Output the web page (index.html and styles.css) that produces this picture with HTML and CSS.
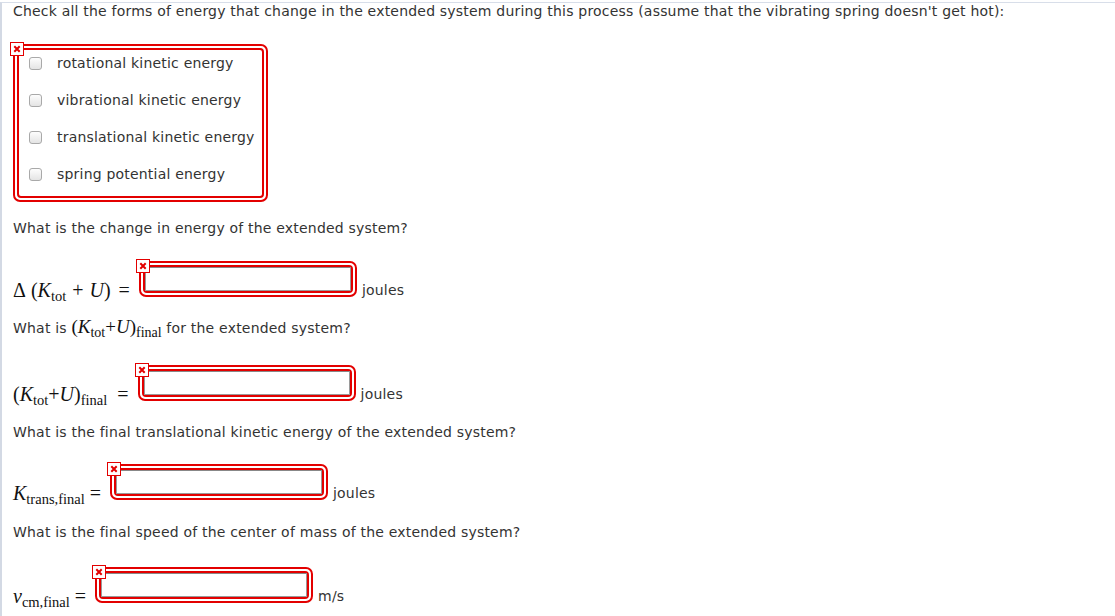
FILE: index.html
```
<!DOCTYPE html>
<html>
<head>
<meta charset="utf-8">
<link rel="stylesheet" href="styles.css">
</head>
<body>
<div class="page">
  <p class="q q-first">Check all the forms of energy that change in the extended system during this process (assume that the vibrating spring doesn't get hot):</p>

  <div class="grp">
    <span class="err"><svg width="14" height="14" viewBox="0 0 14 14"><rect x="0.5" y="0.5" width="13" height="13" fill="#fff" stroke="#e30000"/><path d="M4.3 4.3 L9.7 9.7 M9.7 4.3 L4.3 9.7" stroke="#e30000" stroke-width="2"/></svg></span>
    <div class="grp-in">
      <label class="opt"><span class="cb"></span><span>rotational kinetic energy</span></label>
      <label class="opt"><span class="cb"></span><span>vibrational kinetic energy</span></label>
      <label class="opt"><span class="cb"></span><span>translational kinetic energy</span></label>
      <label class="opt"><span class="cb"></span><span>spring potential energy</span></label>
    </div>
  </div>

  <p class="q q2">What is the change in energy of the extended system?</p>

  <div class="row r1">
    <span class="math m1"><span class="up">Δ</span><span class="sp"></span><span class="up">(</span><i>K</i><sub>tot</sub><span class="op">+</span><i>U</i><span class="up">)</span><span class="eq">=</span></span>
    <span class="ans"><span class="err"><svg width="14" height="14" viewBox="0 0 14 14"><rect x="0.5" y="0.5" width="13" height="13" fill="#fff" stroke="#e30000"/><path d="M4.3 4.3 L9.7 9.7 M9.7 4.3 L4.3 9.7" stroke="#e30000" stroke-width="2"/></svg></span><span class="ans-in"><span class="inp"></span></span></span>
    <span class="unit">joules</span>
  </div>

  <p class="q q3">What is <span class="imath"><span class="up">(</span><i>K</i><sub>tot</sub><span class="up">+</span><i>U</i><span class="up">)</span><sub>final</sub></span> for the extended system?</p>

  <div class="row r2">
    <span class="math m2"><span class="up">(</span><i>K</i><sub>tot</sub><span class="up">+</span><i>U</i><span class="up">)</span><sub>final</sub><span class="eq">=</span></span>
    <span class="ans"><span class="err"><svg width="14" height="14" viewBox="0 0 14 14"><rect x="0.5" y="0.5" width="13" height="13" fill="#fff" stroke="#e30000"/><path d="M4.3 4.3 L9.7 9.7 M9.7 4.3 L4.3 9.7" stroke="#e30000" stroke-width="2"/></svg></span><span class="ans-in"><span class="inp"></span></span></span>
    <span class="unit">joules</span>
  </div>

  <p class="q q4">What is the final translational kinetic energy of the extended system?</p>

  <div class="row r3">
    <span class="math m3"><i>K</i><sub>trans,final</sub><span class="eq">=</span></span>
    <span class="ans"><span class="err"><svg width="14" height="14" viewBox="0 0 14 14"><rect x="0.5" y="0.5" width="13" height="13" fill="#fff" stroke="#e30000"/><path d="M4.3 4.3 L9.7 9.7 M9.7 4.3 L4.3 9.7" stroke="#e30000" stroke-width="2"/></svg></span><span class="ans-in"><span class="inp"></span></span></span>
    <span class="unit">joules</span>
  </div>

  <p class="q q5">What is the final speed of the center of mass of the extended system?</p>

  <div class="row r4">
    <span class="math m4"><i>v</i><sub>cm,final</sub><span class="eq">=</span></span>
    <span class="ans"><span class="err"><svg width="14" height="14" viewBox="0 0 14 14"><rect x="0.5" y="0.5" width="13" height="13" fill="#fff" stroke="#e30000"/><path d="M4.3 4.3 L9.7 9.7 M9.7 4.3 L4.3 9.7" stroke="#e30000" stroke-width="2"/></svg></span><span class="ans-in"><span class="inp"></span></span></span>
    <span class="unit">m/s</span>
  </div>
</div>
</body>
</html>
```
FILE: styles.css
```
html, body {
  margin: 0;
  padding: 0;
  background: #fff;
}
body {
  font-family: "DejaVu Sans", Verdana, sans-serif;
  font-size: 14px;
  letter-spacing: 0.2px;
  color: #333;
}
.page {
  border-left: 2px solid #d3d9e4;
  border-top: 1px solid #d8dee9;
  margin-top: 2px;
  height: 614px;
  box-sizing: border-box;
  padding-left: 11px;
  padding-top: 0;
  overflow: hidden;
}
.q {
  margin: 0;
  line-height: 16px;
}

.grp {
  position: relative;
  width: 255px;
  margin-top: 25px;
  border: 2px solid #e30000;
  border-radius: 7px;
  padding: 2px;
  box-sizing: border-box;
}
.grp-in {
  border: 2px solid #e30000;
  border-radius: 4px;
  padding: 1px 0 10px 10px;
  display: flex;
  flex-direction: column;
  gap: 13px;
}
.err {
  position: absolute;
  left: -5px;
  top: -4px;
  width: 14px;
  height: 14px;
  line-height: 0;
}
.err svg { display: block; }
.opt {
  display: flex;
  align-items: center;
  height: 24px;
}
.cb {
  width: 13px;
  height: 13px;
  box-sizing: border-box;
  border: 1px solid #a9a9a9;
  border-radius: 3px;
  background: linear-gradient(#fdfdfd, #e4e4e4);
  margin-right: 15px;
  flex: none;
}

.q2 { margin-top: 18px; }
.q3 { margin-top: 23px; }
.q4 { margin-top: 23px; }
.q5 { margin-top: 24px; }

.row {
  display: flex;
  align-items: flex-end;
}
.r1 { margin-top: 25px; }
.r2 { margin-top: 29px; }
.r3 { margin-top: 24px; }
.r4 { margin-top: 27px; }

.math, .imath {
  font-family: "Liberation Serif", "Times New Roman", serif;
  font-size: 20px;
  letter-spacing: 0;
  color: #111;
  white-space: nowrap;
}
.math {
  line-height: 20px;
  margin-right: 9px;
  margin-bottom: -3px;
}
.imath { line-height: 0; font-size: 19px; }
.math i, .imath i { font-style: italic; }
.math sub, .imath sub {
  font-size: 14.5px;
  vertical-align: -4px;
  line-height: 0;
}
.imath sub { font-size: 14px; }
.math .sp { display: inline-block; width: 5px; }
.math .op { margin: 0 6px; }
.m2 .op { margin: 0; }
.math .eq { margin-left: 8px; }
.m2 .eq { margin-left: 10px; }
.m3 .eq, .m4 .eq { margin-left: 5px; }

.ans {
  position: relative;
  display: block;
  width: 218px;
  height: 36px;
  box-sizing: border-box;
  border: 2px solid #e30000;
  border-radius: 7px;
  padding: 2px;
  flex: none;
}
.ans-in {
  display: block;
  height: 100%;
  box-sizing: border-box;
  border: 2px solid #e30000;
  border-radius: 4px;
}
.inp {
  display: block;
  height: 100%;
  box-sizing: border-box;
  border: 1px solid #9a9a9a;
  border-top-color: #888;
  background: #fff;
}
.unit {
  margin-left: 5px;
  line-height: 16px;
  margin-bottom: -1px;
}
```
